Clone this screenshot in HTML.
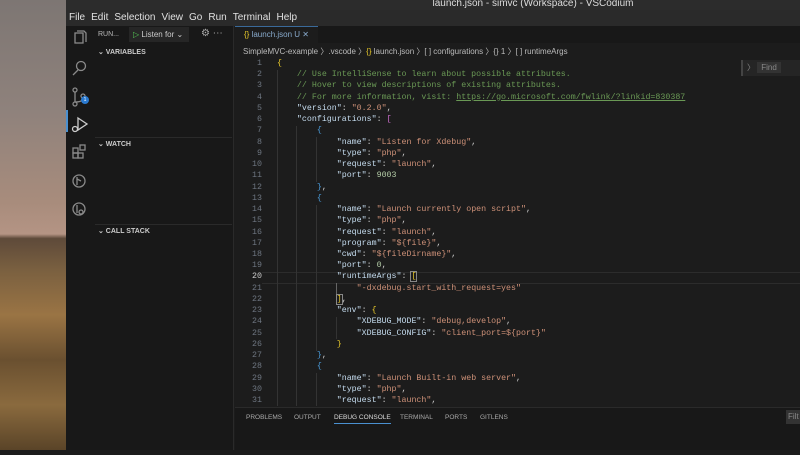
<!DOCTYPE html>
<html><head><meta charset="utf-8"><style>
*{margin:0;padding:0;box-sizing:border-box}
body{width:800px;height:450px;overflow:hidden;background:#1c1c1c;font-family:"Liberation Sans",sans-serif;position:relative}
.wp{position:absolute;left:0;top:0;width:66px;height:450px;background:linear-gradient(180deg,#7d7673 0%,#8f827c 25%,#a88c7c 45%,#b49484 52%,#5e4a3a 53%,#7a6040 60%,#9a7444 70%,#6a5030 80%,#8a6a3e 90%,#5a4428 100%)}
.title{position:absolute;left:66px;top:0;width:734px;height:10px;background:#2c2c2c;color:#ddd;font-size:10px;line-height:8px;text-align:center;padding-left:200px;overflow:hidden}
.menu{position:absolute;left:66px;top:10px;width:734px;height:16px;background:#2a2a2a;color:#e0e0e0;font-size:10px;line-height:16px}
.menu span{margin-right:6px}
.menu span:first-child{margin-left:3px}
.act{position:absolute;left:66px;top:26px;width:27px;height:424px;background:#181818}
.side{position:absolute;left:93px;top:26px;width:141px;height:424px;background:#181818;border-right:1px solid #2a2a2a;color:#ccc;font-size:7px;font-weight:bold}
.tabs{position:absolute;left:235px;top:26px;width:565px;height:17px;background:#181818}
.tab{position:absolute;left:0;top:0;width:83px;height:17px;background:#1c1c1c;border-top:1px solid #3a6a9a;color:#8ac;font-size:8px;line-height:16px;padding-left:9px}
.bc{position:absolute;left:243px;top:46px;color:#bbb;font-size:8px}
.code{position:absolute;left:235px;top:58px;font-family:"Liberation Mono",monospace;font-size:8.3px;line-height:11.23px;white-space:pre;color:#d4d4d4}
.ln{position:absolute;left:235px;top:58px;width:27px;text-align:right;font-family:"Liberation Mono",monospace;font-size:8.3px;line-height:11.23px;color:#6e7681;white-space:pre}
.k{color:#c5dcef}.s{color:#ce9178}.c{color:#6a9955}.n{color:#b5cea8}.y{color:#e8c92a}.p{color:#d070d0}.b{color:#4a9ad8}
.panel{position:absolute;left:235px;top:407px;width:565px;height:43px;background:#181818;border-top:1px solid #2a2a2a;color:#aaa;font-size:6.5px}
.panel span{position:absolute;top:6px}
.g{position:absolute;width:1px;background:#333}
</style></head><body>
<div class="wp"></div>
<div class="title">launch.json - simvc (Workspace) - VSCodium</div>
<div class="menu"><span>File</span><span>Edit</span><span>Selection</span><span>View</span><span>Go</span><span>Run</span><span>Terminal</span><span>Help</span></div>
<div class="act">
<svg width="27" height="424" viewBox="0 0 27 424" fill="none" stroke="#8a8a8a" stroke-width="1.3">
<rect x="9" y="7" width="8" height="10"/><path d="M11 5h7l2 2v9"/>
<circle cx="15" cy="40" r="4.5"/><path d="M12 44l-5 5"/>
<circle cx="9" cy="64" r="2"/><circle cx="9" cy="78" r="2"/><circle cx="17" cy="70" r="2"/><path d="M9 66v10M17 72q0 4-8 4"/>
<path d="M12 92l9 6-9 6z" stroke="#ccc"/><circle cx="9" cy="103" r="2.5" stroke="#ccc"/>
<rect x="7" y="122" width="5" height="5"/><rect x="12" y="127" width="5" height="5"/><rect x="7" y="127" width="5" height="5"/><rect x="14" y="119" width="5" height="5"/>
<circle cx="13" cy="155" r="6"/><path d="M11 151v8M11 153l4 2"/>
<circle cx="13" cy="183" r="6"/><path d="M11 179v8"/><circle cx="15" cy="186" r="2"/>
</svg>
<div style="position:absolute;left:0;top:84px;width:2px;height:22px;background:#4a90d0"></div>
<div style="position:absolute;left:15px;top:70px;width:8px;height:8px;border-radius:50%;background:#2a7ad0;color:#fff;font-size:5px;text-align:center;line-height:8px">1</div>
</div>
<div class="side">
<div style="position:absolute;left:5px;top:5px;font-weight:normal;color:#bbb;font-size:7px">RUN...</div>
<div style="position:absolute;left:36px;top:1px;width:60px;height:15px;background:#262626;color:#ccc;font-weight:normal;font-size:8px;line-height:15px;padding-left:4px"><span style="color:#5c5">▷</span> Listen for ⌄</div>
<div style="position:absolute;left:108px;top:2px;color:#aaa;font-size:10px;font-weight:normal">⚙ ⋯</div>
<div style="position:absolute;left:5px;top:22px">⌄ VARIABLES</div>
<div style="position:absolute;left:2px;top:111px;width:137px;border-top:1px solid #2a2a2a"></div>
<div style="position:absolute;left:5px;top:114px">⌄ WATCH</div>
<div style="position:absolute;left:2px;top:198px;width:137px;border-top:1px solid #2a2a2a"></div>
<div style="position:absolute;left:5px;top:201px">⌄ CALL STACK</div>
</div>
<div class="tabs"><div class="tab"><span class="y">{}</span> launch.json U ✕</div></div>
<div class="bc">SimpleMVC-example 〉.vscode 〉<span class="y">{}</span> launch.json 〉[ ] configurations 〉{} 1 〉[ ] runtimeArgs</div>
<div style="position:absolute;left:741px;top:60px;width:59px;height:16px;background:#252525;border-left:2px solid #444;color:#888;font-size:8px;line-height:16px;padding-left:4px">〉 <span style="background:#333;padding:1px 4px">Find</span></div>
<div class="ln">1
2
3
4
5
6
7
8
9
10
11
12
13
14
15
16
17
18
19
<span style="color:#ccc">20</span>
21
22
23
24
25
26
27
28
29
30
31</div>
<div style="position:absolute;left:262px;top:272px;width:538px;height:12px;border-top:1px solid #2c2c2c;border-bottom:1px solid #2c2c2c"></div>
<div class="g" style="left:277px;top:70px;height:336px"></div>
<div class="g" style="left:296px;top:126px;height:280px"></div>
<div class="g" style="left:316px;top:137px;height:45px"></div>
<div class="g" style="left:316px;top:205px;height:146px"></div>
<div class="g" style="left:316px;top:373px;height:33px"></div>
<div class="g" style="left:336px;top:283px;height:11px;background:#666"></div>
<div class="g" style="left:336px;top:317px;height:22px"></div>
<div class="code" style="left:277px"><span class="y">{</span>
    <span class="c">// Use IntelliSense to learn about possible attributes.</span>
    <span class="c">// Hover to view descriptions of existing attributes.</span>
    <span class="c">// For more information, visit: <u>https://go.microsoft.com/fwlink/?linkid=830387</u></span>
    <span class="k">"version"</span>: <span class="s">"0.2.0"</span>,
    <span class="k">"configurations"</span>: <span class="p">[</span>
        <span class="b">{</span>
            <span class="k">"name"</span>: <span class="s">"Listen for Xdebug"</span>,
            <span class="k">"type"</span>: <span class="s">"php"</span>,
            <span class="k">"request"</span>: <span class="s">"launch"</span>,
            <span class="k">"port"</span>: <span class="n">9003</span>
        <span class="b">}</span>,
        <span class="b">{</span>
            <span class="k">"name"</span>: <span class="s">"Launch currently open script"</span>,
            <span class="k">"type"</span>: <span class="s">"php"</span>,
            <span class="k">"request"</span>: <span class="s">"launch"</span>,
            <span class="k">"program"</span>: <span class="s">"${file}"</span>,
            <span class="k">"cwd"</span>: <span class="s">"${fileDirname}"</span>,
            <span class="k">"port"</span>: <span class="n">0</span>,
            <span class="k">"runtimeArgs"</span>: <span class="y" style="outline:1px solid #888">[</span>
                <span class="s">"-dxdebug.start_with_request=yes"</span>
            <span class="y" style="outline:1px solid #888">]</span>,
            <span class="k">"env"</span>: <span class="y">{</span>
                <span class="k">"XDEBUG_MODE"</span>: <span class="s">"debug,develop"</span>,
                <span class="k">"XDEBUG_CONFIG"</span>: <span class="s">"client_port=${port}"</span>
            <span class="y">}</span>
        <span class="b">}</span>,
        <span class="b">{</span>
            <span class="k">"name"</span>: <span class="s">"Launch Built-in web server"</span>,
            <span class="k">"type"</span>: <span class="s">"php"</span>,
            <span class="k">"request"</span>: <span class="s">"launch"</span>,</div>
<div class="panel">
<span style="left:11px">PROBLEMS</span><span style="left:59px">OUTPUT</span><span style="left:99px;color:#ddd;border-bottom:1px solid #4a90d0;padding-bottom:2px">DEBUG CONSOLE</span><span style="left:165px">TERMINAL</span><span style="left:210px">PORTS</span><span style="left:245px">GITLENS</span>
<div style="position:absolute;left:551px;top:2px;width:14px;height:14px;background:#333;color:#888;font-size:8px;padding:2px">Filt</div>
</div>
</body></html>
